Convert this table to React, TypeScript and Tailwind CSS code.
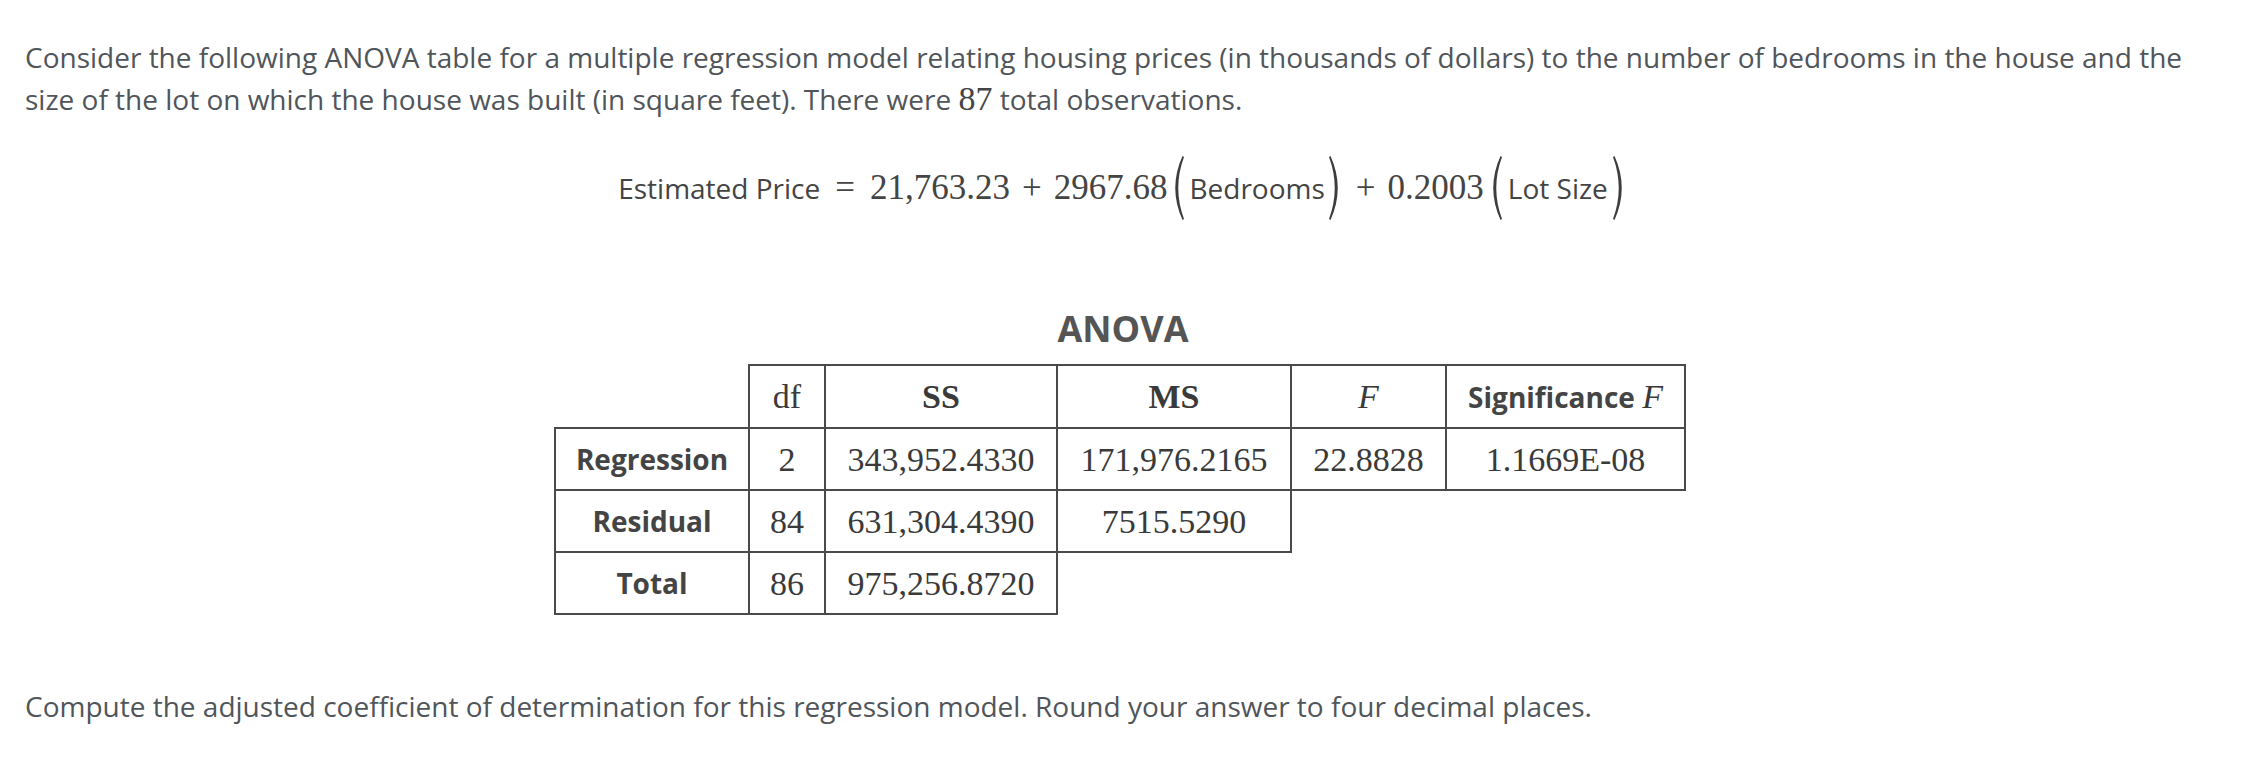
const sans = "font-['Open_Sans',sans-serif]";
const serif = "font-['Liberation_Serif','Times_New_Roman',serif]";

function Paren({ right = false }: { right?: boolean }) {
  return (
    <svg width="15" height="64" viewBox="0 0 15 64" className={right ? "-scale-x-100" : ""}>
      <path d="M13.5 0 Q-1 32 13.5 64 L15 63 Q3.5 32 15 1 Z" fill="#3d3d3d" />
    </svg>
  );
}

const cell = "border-2 border-[#4a4a4a] text-center p-0";
const num = `${cell} ${serif} text-[34px] text-[#3a3a3a]`;
const label = `${cell} ${sans} text-[28px] font-bold text-[#444]`;
const math = `${serif} text-[35px] leading-[40px]`;

export default function App() {
  return (
    <div className={`${sans} text-[#50555a] pl-[25px] pr-[45px] pt-[36px] pb-10 bg-white`}>
      <p className="text-[28px] leading-[42px]">
        Consider the following ANOVA table for a multiple regression model relating housing prices (in thousands of dollars) to
        the number of bedrooms in the house and the size of the lot on which the house was built (in square feet). There were{" "}
        <span className={`${serif} text-[34px] leading-[30px] text-[#444]`}>87</span> total observations.
      </p>

      <div className="mt-[36px] flex items-center justify-center text-[#444]">
        <span className="text-[28px] leading-[40px]">Estimated Price</span>
        <span className={`${math} mx-[15px]`}>=</span>
        <span className={math}>21,763.23</span>
        <span className={`${math} mx-[12px]`}>+</span>
        <span className={math}>2967.68</span>
        <span className="ml-[2px] mr-[5px] flex"><Paren /></span>
        <span className="text-[28px] leading-[40px]">Bedrooms</span>
        <span className="ml-[4px] mr-[12px] flex"><Paren right /></span>
        <span className={`${math} mr-[12px]`}>+</span>
        <span className={math}>0.2003</span>
        <span className="ml-[3px] mr-[6px] flex"><Paren /></span>
        <span className="text-[28px] leading-[40px]">Lot Size</span>
        <span className="ml-[5px] flex"><Paren right /></span>
      </div>

      <div className="mt-[89px] text-center text-[36px] leading-[40px] font-bold text-[#555]">ANOVA</div>

      <div className="mt-[15px] flex justify-center">
        <table className="border-collapse table-fixed ml-[-6px]">
          <colgroup>
            <col className="w-[194px]" />
            <col className="w-[76px]" />
            <col className="w-[232px]" />
            <col className="w-[234px]" />
            <col className="w-[155px]" />
            <col className="w-[239px]" />
          </colgroup>
          <tbody>
            <tr className="h-[63px]">
              <td className="p-0"></td>
              <td className={num}>df</td>
              <td className={`${num} font-bold`}>SS</td>
              <td className={`${num} font-bold`}>MS</td>
              <td className={`${num} italic`}>F</td>
              <td className={label}>
                Significance <span className={`${serif} italic font-normal text-[34px] text-[#3a3a3a]`}>F</span>
              </td>
            </tr>
            <tr className="h-[62px]">
              <td className={label}>Regression</td>
              <td className={num}>2</td>
              <td className={num}>343,952.4330</td>
              <td className={num}>171,976.2165</td>
              <td className={num}>22.8828</td>
              <td className={num}>1.1669E-08</td>
            </tr>
            <tr className="h-[62px]">
              <td className={label}>Residual</td>
              <td className={num}>84</td>
              <td className={num}>631,304.4390</td>
              <td className={num}>7515.5290</td>
              <td className="p-0"></td>
              <td className="p-0"></td>
            </tr>
            <tr className="h-[62px]">
              <td className={label}>Total</td>
              <td className={num}>86</td>
              <td className={num}>975,256.8720</td>
              <td className="p-0"></td>
              <td className="p-0"></td>
              <td className="p-0"></td>
            </tr>
          </tbody>
        </table>
      </div>

      <p className="mt-[70px] text-[28px] leading-[42px]">
        Compute the adjusted coefficient of determination for this regression model. Round your answer to four decimal places.
      </p>
    </div>
  );
}
